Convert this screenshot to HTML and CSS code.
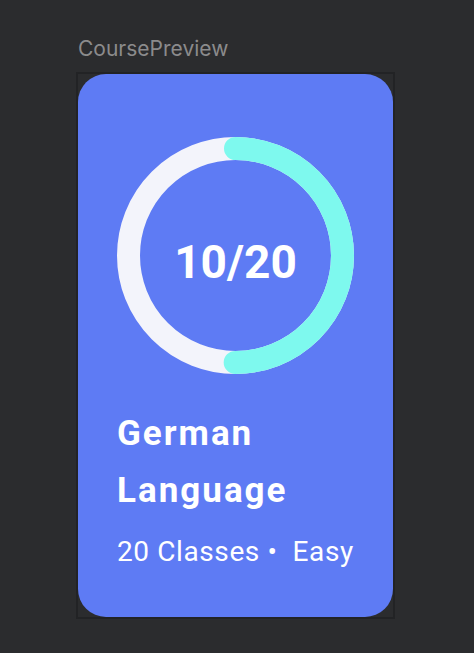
FILE: index.html
```html
<!DOCTYPE html>
<html lang="en">
  <head>
    <meta charset="UTF-8" />
    <meta name="viewport" content="width=device-width, initial-scale=1.0" />
    <title>CoursePreview</title>
    <link rel="stylesheet" href="styles.css">
  </head>

  <body>
    <div class="preview">
      <div class="label">CoursePreview</div>
      <div class="frame">
        <div class="card">
          <div class="ring">
            <svg width="237" height="237" viewBox="0 0 237 237">
              <circle class="track" cx="118.5" cy="118.5" r="107" />
              <circle class="done" cx="118.5" cy="118.5" r="107"
                stroke-dasharray="336.15 672.3"
                transform="rotate(-90 118.5 118.5)" />
            </svg>
            <span class="count">10/20</span>
          </div>
          <h2 class="title">German<br />Language</h2>
          <p class="info">20 Classes •&nbsp; Easy</p>
        </div>
      </div>
    </div>
  </body>
</html>
```

FILE: styles.css
```css
* {
  margin: 0;
  padding: 0;
}

body {
  background: #2b2c2e;
  font-family: Roboto, "Liberation Sans", sans-serif;
}

.preview {
  padding: 37px 0 0 76px;
}

.label {
  margin-left: 2px;
  font-family: Inter, Roboto, sans-serif;
  font-size: 21px;
  line-height: 24px;
  color: #8b8b8c;
}

.frame {
  width: 315px;
  margin-top: 11px;
  border: 2px solid #222325;
}

.card {
  height: 543px;
  box-sizing: border-box;
  padding: 63px 39px 0;
  background: #5e7bf4;
  border-radius: 28px;
  color: #fff;
}

.ring {
  display: grid;
  place-items: center;
  width: 237px;
  margin: 0 auto;
}

.ring svg,
.ring .count {
  grid-area: 1 / 1;
}

.ring svg {
  display: block;
}

.ring circle {
  fill: none;
  stroke-width: 23;
}

.track {
  stroke: #f3f4fb;
}

.done {
  stroke: #7ef9ee;
  stroke-linecap: round;
}

.count {
  margin-top: 12px;
  font-size: 46px;
  font-weight: 700;
  line-height: 1;
}

.title {
  margin-top: 31px;
  font-size: 35px;
  font-weight: 700;
  line-height: 57px;
  letter-spacing: 2px;
}

.info {
  margin-top: 13px;
  font-size: 28px;
  line-height: 40px;
  letter-spacing: 0.6px;
  white-space: nowrap;
}
```
